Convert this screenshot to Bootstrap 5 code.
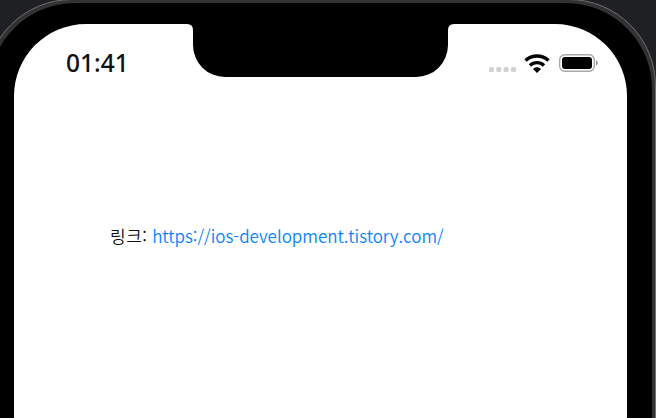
<!DOCTYPE html>
<html lang="ko">
<head>
<meta charset="utf-8">
<title>Preview</title>
<link href="https://cdn.jsdelivr.net/npm/bootstrap@5.3.0/dist/css/bootstrap.min.css" rel="stylesheet">
<style>
html, body { margin: 0; height: 418px; overflow: hidden; background: #1f2024; }
.stage { width: 656px; height: 418px; overflow: hidden; }
.phone-frame { margin: -1px 0 0 -15px; width: 671px; height: 700px; padding: 3px; background: #323232; border: 1px solid #707070; border-radius: 87px; }
.phone-bezel { height: 100%; padding: 21px 25px 0; background: #000; border-radius: 86px; }
.phone-screen { position: relative; height: 600px; background: #fff; border-radius: 72px 72px 0 0; }
.notch-shape { position: absolute; left: 173px; top: 0; }
.status-row { height: 54px; padding: 24px 27px 0 52px; }
.status-time { font: 500 24.500px/30px "Noto Sans", "Liberation Sans", sans-serif; color: #111; }
.link-row { margin: 146px 0 0; padding-left: 96px; font: 350 17px/24px "Noto Sans CJK KR", "Noto Sans", sans-serif; color: #111; white-space: nowrap; }
.link-label { letter-spacing: .5px; }
.link-row a { color: #0a84ff; text-decoration: none; letter-spacing: -.02px; }
</style>
</head>
<body>
<div class="stage">
  <div class="phone-frame">
    <div class="phone-bezel">
      <div class="phone-screen">
        <svg class="notch-shape" width="267" height="54" viewBox="0 0 267 54" xmlns="http://www.w3.org/2000/svg" aria-hidden="true">
          <path d="M0 0Q6 0 6 6V21A32 32 0 0 0 38 53H229A32 32 0 0 0 261 21V6Q261 0 267 0Z" fill="#000"/>
        </svg>
        <div class="status-row d-flex justify-content-between align-items-center">
          <span class="status-time">01:41</span>
          <svg width="115" height="30" viewBox="485 48 115 30" xmlns="http://www.w3.org/2000/svg" aria-hidden="true">
            <g fill="#d2d2d2">
              <rect x="489" y="67" width="5" height="5" rx="1.500"/>
              <rect x="496.300" y="67" width="5" height="5" rx="1.500"/>
              <rect x="503.600" y="67" width="5" height="5" rx="1.500"/>
              <rect x="511" y="67" width="5" height="5" rx="1.500"/>
            </g>
            <g fill="none" stroke="#000" stroke-width="3.400">
              <path d="M525.500 60.500c6.500-6 16.500-6 23 0"/>
              <path d="M530 65.500c4-3.800 10-3.800 14 0"/>
            </g>
            <path d="M533 69c2.500-2.200 5.500-2.200 8 0l-4 4z" fill="#000"/>
            <rect x="559.700" y="54.700" width="34.600" height="16.600" rx="5" fill="#fff" stroke="#a8a8a8" stroke-width="1.400"/>
            <rect x="562" y="57" width="30" height="12" rx="3" fill="#000"/>
            <path d="M596 60.500c1.200.3 1.800 1.200 1.800 2.500s-.6 2.200-1.800 2.500z" fill="#999"/>
          </svg>
        </div>
        <p class="link-row"><span class="link-label">링크:</span> <a href="#">https://ios-development.tistory.com/</a></p>
      </div>
    </div>
  </div>
</div>
<script src="https://cdn.jsdelivr.net/npm/bootstrap@5.3.0/dist/js/bootstrap.bundle.min.js"></script>
</body>
</html>
